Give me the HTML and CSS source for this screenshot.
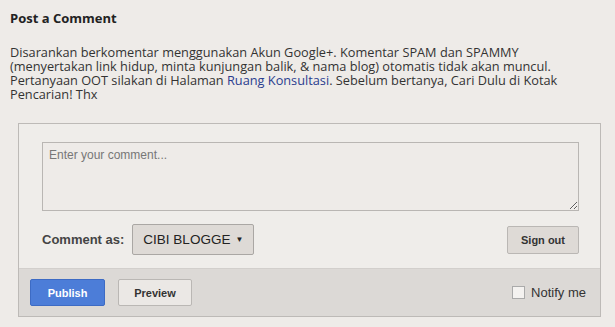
FILE: index.html
```html
<!DOCTYPE html>
<html lang="en">
<head>
  <meta charset="UTF-8">
  <meta name="viewport" content="width=device-width, initial-scale=1.0">
  <title>Post a Comment</title>
  <link rel="stylesheet" href="styles.css">
</head>
<body>
  <div class="comments">
    <h4 class="comment-title">Post a Comment</h4>
    <p class="comment-note">
      Disarankan berkomentar menggunakan Akun Google+. Komentar SPAM dan SPAMMY (menyertakan link hidup, minta kunjungan balik, &amp; nama blog) otomatis tidak akan muncul. Pertanyaan OOT silakan di Halaman <a href="#">Ruang Konsultasi</a>. Sebelum bertanya, Cari Dulu di Kotak Pencarian! Thx
    </p>

    <div class="comment-form">
      <div class="form-body">
        <textarea class="comment-input" placeholder="Enter your comment..."></textarea>
        <div class="identity-row">
          <span class="comment-as">Comment as:</span>
          <div class="identity-select">
            <span>CIBI BLOGGE</span>
            <span class="caret">&#9660;</span>
          </div>
          <button class="btn sign-out">Sign out</button>
        </div>
      </div>
      <div class="form-footer">
        <button class="btn publish">Publish</button>
        <button class="btn preview">Preview</button>
        <label class="notify">
          <span class="check"></span> Notify me
        </label>
      </div>
    </div>
  </div>
</body>
</html>
```

FILE: styles.css
```css
/* Blogger style comment form */
body {
  margin: 0;
  padding: 0;
  background-color: #eeebe8;
  font-family: "Open Sans", sans-serif;
  color: #333;
}

.comments {
  padding: 9px 10px 0 10px;
}

.comment-title {
  margin: 0;
  font-size: 13px;
  line-height: 18px;
  font-weight: bold;
  color: #222;
}

.comment-note {
  margin: 18px 0 0 0;
  font-size: 12.75px;
  line-height: 14px;
  color: #333;
  width: 585px;
}

.comment-note a {
  color: #2a3d8f;
  text-decoration: none;
}

.comment-form {
  margin: 22px 4px 0 8px;
  border: 1px solid #bdbab7;
  background-color: #efedea;
  font-family: "Liberation Sans", Arial, sans-serif;
}

.form-body {
  padding: 18px 21px 13px 23px;
}

.comment-input {
  display: block;
  width: 100%;
  height: 69px;
  box-sizing: border-box;
  border: 1px solid #b9b6b3;
  background-color: #eeebe8;
  padding: 5px 6px;
  margin: 0;
  font-family: "Liberation Sans", Arial, sans-serif;
  font-size: 12px;
  resize: vertical;
}

.comment-input::placeholder {
  color: #777;
}

.identity-row {
  display: flex;
  align-items: center;
  margin-top: 13px;
}

.comment-as {
  font-size: 13px;
  font-weight: bold;
  color: #444;
}

.identity-select {
  display: flex;
  align-items: center;
  justify-content: space-between;
  box-sizing: border-box;
  width: 122px;
  height: 31px;
  margin-left: 8px;
  padding: 0 10px 0 10px;
  border: 1px solid #aaa7a4;
  border-radius: 2px;
  background-color: #dedad6;
  font-size: 13.5px;
  color: #222;
}

.caret {
  font-size: 8px;
}

.btn {
  box-sizing: border-box;
  height: 27px;
  border: 1px solid #bab7b4;
  border-radius: 2px;
  background-color: #dedad6;
  font-family: "Liberation Sans", Arial, sans-serif;
  font-size: 11px;
  font-weight: bold;
  color: #333;
  padding: 0;
}

.sign-out {
  margin-left: auto;
  width: 72px;
  height: 28px;
}

.form-footer {
  display: flex;
  align-items: center;
  height: 47px;
  padding: 0 14px 0 11px;
  background-color: #dcd9d6;
  border-top: 1px solid #d2cfcc;
}

.publish {
  width: 75px;
  background-color: #4c7dd8;
  border-color: #3d6bc4;
  color: #fff;
}

.preview {
  width: 74px;
  margin-left: 13px;
  background-color: #ebe8e5;
}

.notify {
  margin-left: auto;
  display: flex;
  align-items: center;
  font-size: 13px;
  color: #333;
}

.check {
  display: inline-block;
  width: 11px;
  height: 11px;
  margin-right: 6px;
  border: 1px solid #aaa;
  background-color: #f4f2f0;
}
```
